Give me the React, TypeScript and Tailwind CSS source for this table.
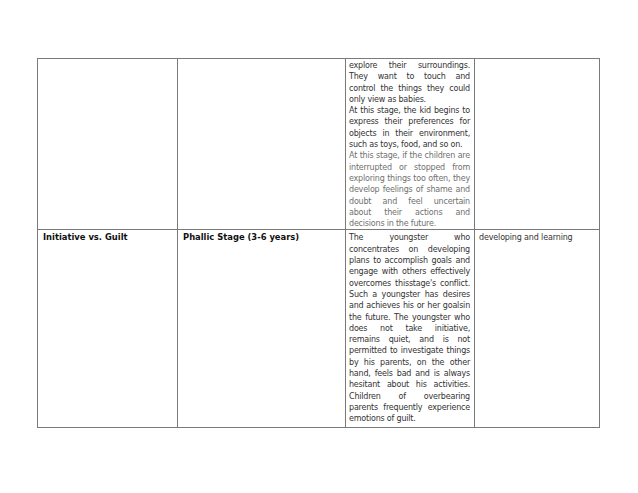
const ROW_ONE: { text: string; last?: boolean; light?: boolean }[] = [
  { text: 'explore their surroundings.' },
  { text: 'They want to touch and' },
  { text: 'control the things they could' },
  { text: 'only view as babies.', last: true },
  { text: 'At this stage, the kid begins to' },
  { text: 'express their preferences for' },
  { text: 'objects in their environment,' },
  { text: 'such as toys, food, and so on.', last: true },
  { text: 'At this stage, if the children are', light: true },
  { text: 'interrupted or stopped from', light: true },
  { text: 'exploring things too often, they', light: true },
  { text: 'develop feelings of shame and', light: true },
  { text: 'doubt and feel uncertain', light: true },
  { text: 'about their actions and', light: true },
  { text: 'decisions in the future.', light: true, last: true },
];

const ROW_TWO: { text: string; last?: boolean; light?: boolean }[] = [
  { text: 'The youngster who' },
  { text: 'concentrates on developing' },
  { text: 'plans to accomplish goals and' },
  { text: 'engage with others effectively' },
  { text: "overcomes thisstage's conflict." },
  { text: 'Such a youngster has desires' },
  { text: 'and achieves his or her goalsin' },
  { text: 'the future. The youngster who' },
  { text: 'does not take initiative,' },
  { text: 'remains quiet, and is not' },
  { text: 'permitted to investigate things' },
  { text: 'by his parents, on the other' },
  { text: 'hand, feels bad and is always' },
  { text: 'hesitant about his activities.' },
  { text: 'Children of overbearing' },
  { text: 'parents frequently experience' },
  { text: 'emotions of guilt.', last: true },
];

function Lines({ lines }: { lines: typeof ROW_ONE }) {
  return (
    <div className="text-[8px] leading-[11.3px] tracking-[-0.2px]">
      {lines.map((l, i) => (
        <div
          key={i}
          className={`whitespace-nowrap ${l.last ? 'text-left' : 'text-justify [text-align-last:justify]'} ${l.light ? 'text-[#707070]' : 'text-[#333]'}`}
        >
          {l.text}
        </div>
      ))}
    </div>
  );
}

export default function App() {
  return (
    <div className="w-[638px] h-[493px] bg-white pt-[58px] pl-[37px] font-['DejaVu_Sans',sans-serif]">
      <div className="grid grid-cols-[140px_168px_129px_125px] w-[563px] border-r border-b border-[#7a7a7a]">
        {/* Row 1 */}
        <div className="border-l border-t border-[#7a7a7a]" />
        <div className="border-l border-t border-[#7a7a7a]" />
        <div className="border-l border-t border-[#7a7a7a] pl-[3px] pr-[4px] pt-[1px]">
          <Lines lines={ROW_ONE} />
        </div>
        <div className="border-l border-t border-[#7a7a7a]" />

        {/* Row 2 */}
        <div className="border-l border-t border-[#7a7a7a] pl-[5px] pt-[2px] text-[8.4px] leading-[11px] font-bold text-[#111]">
          Initiative vs. Guilt
        </div>
        <div className="border-l border-t border-[#7a7a7a] pl-[5px] pt-[2px] text-[8.4px] leading-[11px] font-bold text-[#111]">
          Phallic Stage (3-6 years)
        </div>
        <div className="border-l border-t border-[#7a7a7a] pl-[3px] pr-[4px] pt-[2px] pb-[2px]">
          <Lines lines={ROW_TWO} />
        </div>
        <div className="border-l border-t border-[#7a7a7a] pl-[4px] pt-[2px] text-[8px] leading-[11.3px] tracking-[-0.15px] text-[#333]">
          developing and learning
        </div>
      </div>
    </div>
  );
}
